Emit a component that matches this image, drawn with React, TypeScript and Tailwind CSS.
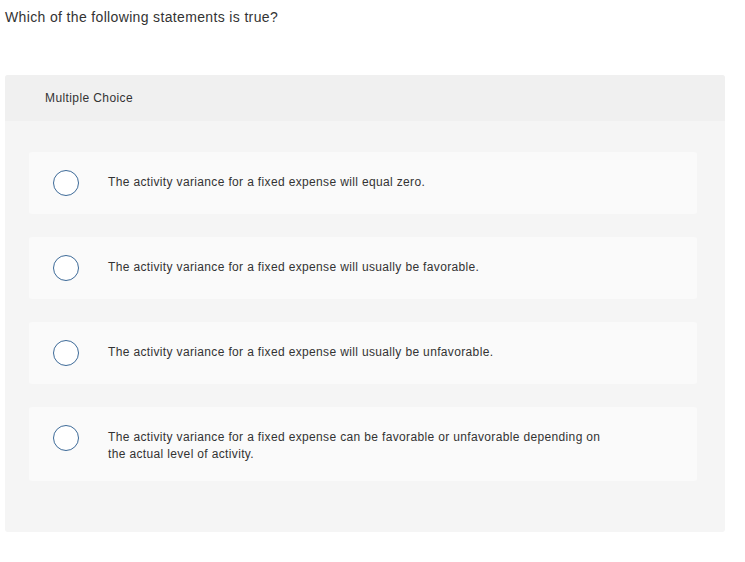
import * as React from "react";

const options = [
  "The activity variance for a fixed expense will equal zero.",
  "The activity variance for a fixed expense will usually be favorable.",
  "The activity variance for a fixed expense will usually be unfavorable.",
  "The activity variance for a fixed expense can be favorable or unfavorable depending on the actual level of activity.",
];

function Option({ text }: { text: string }) {
  return (
    <div className="flex items-start rounded-[3px] bg-[#fafafa] py-[18px] pl-6 pr-10">
      <span className="h-[26px] w-[26px] shrink-0 rounded-full border-[1.5px] border-[#3d6a98] bg-white" />
      <p className="ml-[29px] max-w-[506px] pt-[4px] text-[12px] leading-[17px] tracking-[0.35px] text-[#333]">
        {text}
      </p>
    </div>
  );
}

export default function App() {
  return (
    <div
      className="min-h-[562px] bg-white pt-[8px]"
      style={{ fontFamily: '"Liberation Sans", Arial, sans-serif' }}
    >
      <h1 className="pl-[5px] text-[14px] leading-[18px] tracking-[0.35px] text-[#333]">
        Which of the following statements is true?
      </h1>
      <div className="mt-[49px] ml-[5px] w-[720px] overflow-hidden rounded-[3px] bg-[#f5f5f5] pb-[51px]">
        <div className="flex h-[46px] items-center bg-[#f0f0f0] pl-10 text-[12px] tracking-[0.4px] text-[#333]">
          Multiple Choice
        </div>
        <div className="mt-[31px] ml-6 mr-7 flex flex-col gap-[23px]">
          {options.map((o) => (
            <Option key={o} text={o} />
          ))}
        </div>
      </div>
    </div>
  );
}
